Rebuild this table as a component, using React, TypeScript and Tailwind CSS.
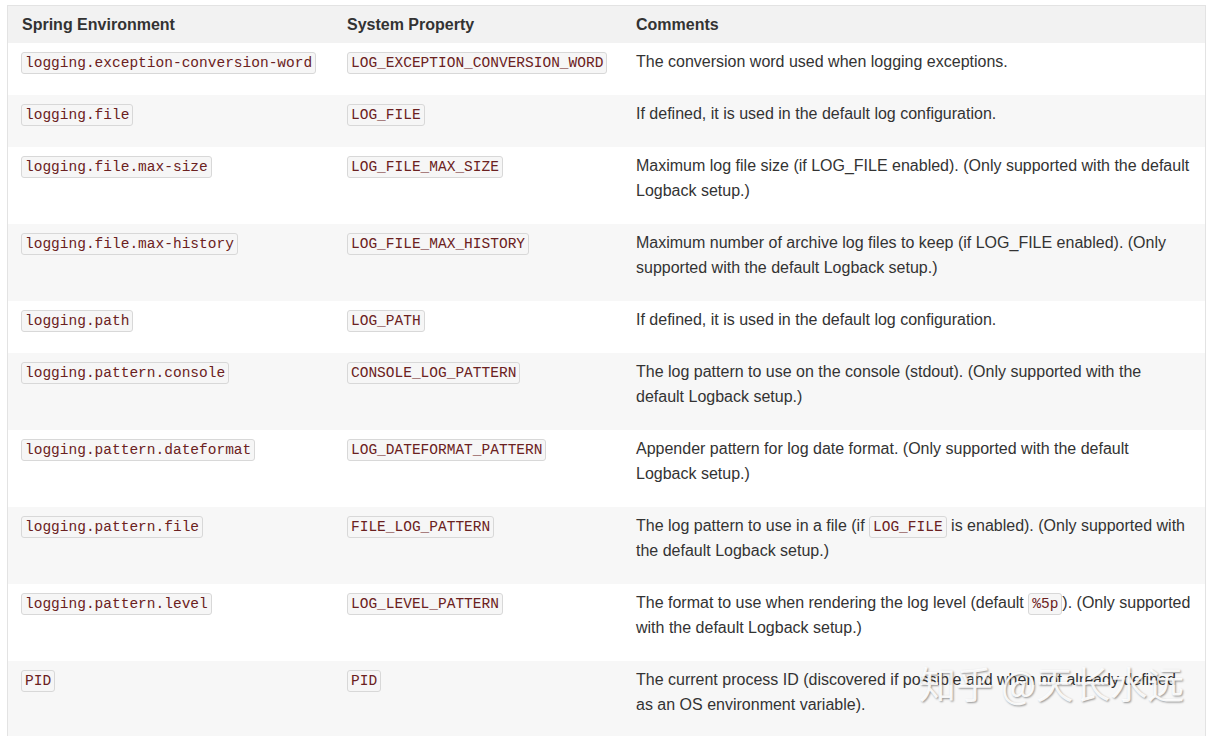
import React from 'react';

const Code = ({ children }: { children: React.ReactNode }) => (
  <code className="inline-block rounded-[3px] border border-[#d8d8d8] bg-[#f6f6f6] px-[3px] py-[1px] align-middle font-['Liberation_Mono','DejaVu_Sans_Mono',monospace] text-[14.5px] leading-[18px] text-[#6b2121]">
    {children}
  </code>
);

const rows: { env: string; prop: string; comment: React.ReactNode }[] = [
  { env: 'logging.exception-conversion-word', prop: 'LOG_EXCEPTION_CONVERSION_WORD', comment: 'The conversion word used when logging exceptions.' },
  { env: 'logging.file', prop: 'LOG_FILE', comment: 'If defined, it is used in the default log configuration.' },
  { env: 'logging.file.max-size', prop: 'LOG_FILE_MAX_SIZE', comment: 'Maximum log file size (if LOG_FILE enabled). (Only supported with the default Logback setup.)' },
  { env: 'logging.file.max-history', prop: 'LOG_FILE_MAX_HISTORY', comment: 'Maximum number of archive log files to keep (if LOG_FILE enabled). (Only supported with the default Logback setup.)' },
  { env: 'logging.path', prop: 'LOG_PATH', comment: 'If defined, it is used in the default log configuration.' },
  { env: 'logging.pattern.console', prop: 'CONSOLE_LOG_PATTERN', comment: 'The log pattern to use on the console (stdout). (Only supported with the default Logback setup.)' },
  { env: 'logging.pattern.dateformat', prop: 'LOG_DATEFORMAT_PATTERN', comment: 'Appender pattern for log date format. (Only supported with the default Logback setup.)' },
  {
    env: 'logging.pattern.file',
    prop: 'FILE_LOG_PATTERN',
    comment: (
      <>
        The log pattern to use in a file (if <Code>LOG_FILE</Code> is enabled). (Only supported with the default Logback setup.)
      </>
    ),
  },
  {
    env: 'logging.pattern.level',
    prop: 'LOG_LEVEL_PATTERN',
    comment: (
      <>
        The format to use when rendering the log level (default <Code>%5p</Code>). (Only supported with the default Logback setup.)
      </>
    ),
  },
  { env: 'PID', prop: 'PID', comment: 'The current process ID (discovered if possible and when not already defined as an OS environment variable).' },
];

const App = () => {
  return (
    <div className="min-h-screen bg-white px-[7px] pt-[5px] font-['Liberation_Sans',Arial,sans-serif] text-[16px] text-[#333]">
      <div className="relative border-x border-t border-[#e3e3e3]">
        <table className="w-full table-fixed border-collapse">
          <colgroup>
            <col className="w-[325px]" />
            <col className="w-[289px]" />
            <col />
          </colgroup>
          <thead>
            <tr className="bg-[#f2f2f2] text-left">
              <th className="px-[14px] py-[6px] leading-[25px] font-bold">Spring Environment</th>
              <th className="px-[14px] py-[6px] leading-[25px] font-bold">System Property</th>
              <th className="px-[14px] py-[6px] leading-[25px] font-bold">Comments</th>
            </tr>
          </thead>
          <tbody>
            {rows.map((r, i) => (
              <tr key={i} className={i % 2 === 1 ? 'bg-[#f7f7f7]' : 'bg-white'}>
                <td className="pl-[13px] pr-[14px] pb-[21px] pt-[6px] align-top leading-[25px]">
                  <Code>{r.env}</Code>
                </td>
                <td className="px-[14px] pb-[21px] pt-[6px] align-top leading-[25px]">
                  <Code>{r.prop}</Code>
                </td>
                <td className="pl-[14px] pr-[12px] pb-[21px] pt-[6px] align-top leading-[25px]">{r.comment}</td>
              </tr>
            ))}
          </tbody>
        </table>
        {/* watermark */}
        <div className="pointer-events-none absolute left-[911px] top-[655px] font-['Noto_Sans_CJK_SC',sans-serif] text-[37px] leading-[44px] text-white/90 [text-shadow:1px_1px_2px_rgba(0,0,0,0.4)]">
          知乎 @天长水远
        </div>
      </div>
    </div>
  );
};

export default App;
